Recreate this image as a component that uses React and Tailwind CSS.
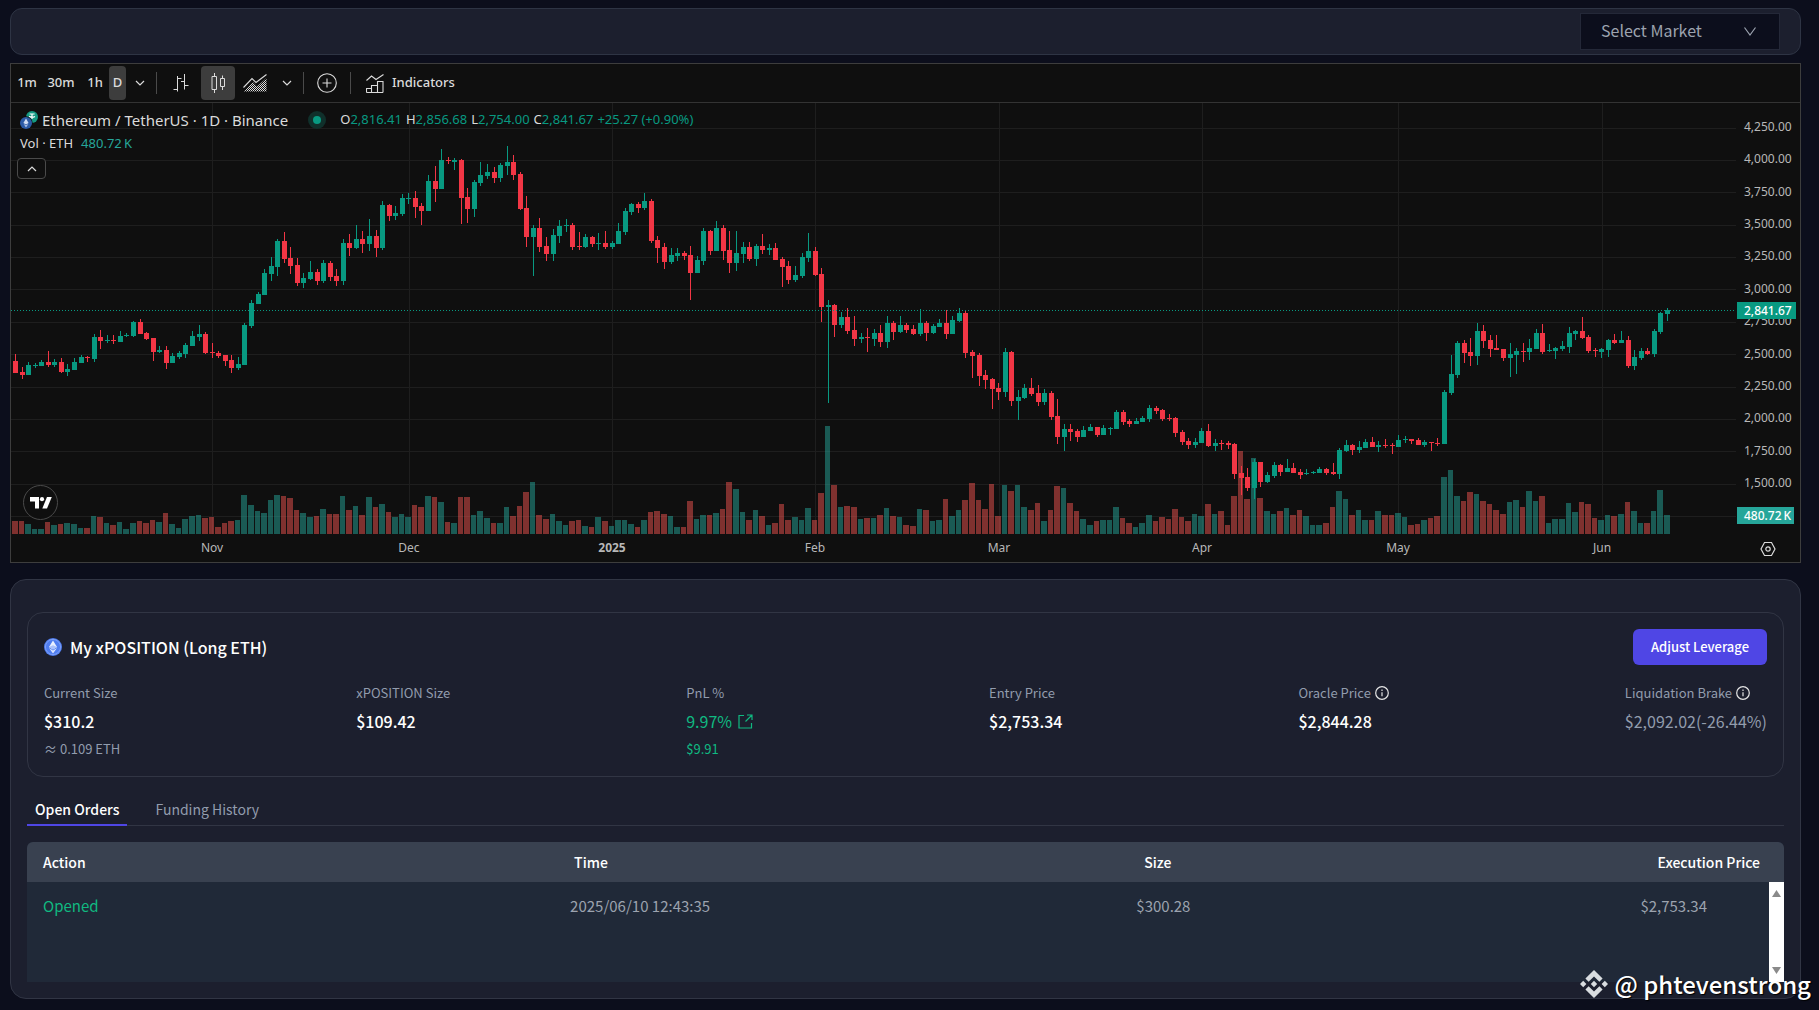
import React from "react";

const CANDLES = `
r354 361 373 373 521|r367 372 375 379 521|g362 365 375 375 524|g363 365 366 368 529|g360 362 366 366 529|r351 362 365 367 522|g359 362 365 367 525|r358 362 372 373 524|g364 369 372 376 523|g358 362 370 370 524|g355 357 363 363 528|r356 357 358 362 528|g334 337 359 362 516|r330 337 341 349 517|g335 340 341 343 523|r335 340 341 344 525|g331 336 342 342 522|g333 335 336 337 529|g321 322 336 337 523|r319 322 334 334 521|r332 333 339 340 523|r338 338 352 361 520|g346 350 352 353 522|r346 350 363 369 513|g353 356 363 363 524|g351 353 357 359 528|g343 345 354 358 519|g331 336 346 346 516|g325 334 337 341 515|r332 334 353 354 518|r343 352 353 358 517|r351 353 356 358 527|r355 355 361 366 523|r355 360 368 373 521|g357 364 368 370 520|g323 325 365 365 495|g300 303 326 328 505|g292 294 304 304 511|g269 273 295 295 513|g257 266 274 281 500|g239 241 267 276 495|r232 241 259 263 496|r247 258 266 274 498|r258 265 283 286 510|g273 278 283 288 513|g261 272 279 280 517|r269 272 281 285 516|g260 263 281 283 509|r261 263 277 281 514|r269 276 281 286 514|g239 243 281 285 496|r234 243 248 256 510|g225 239 248 249 506|r231 239 244 253 515|g219 236 244 251 497|r230 236 248 257 507|g201 205 248 250 504|r204 205 216 221 512|g206 213 216 220 517|g194 198 214 216 514|g193 198 199 204 517|r191 198 207 218 505|r203 206 211 225 507|g175 181 211 211 496|r166 181 189 202 497|g149 160 189 189 502|r157 160 161 164 522|g158 160 162 170 523|r159 160 198 224 497|r188 197 209 223 497|g180 182 209 217 515|g162 175 183 186 511|g164 172 176 179 518|r167 172 178 183 523|g163 165 178 182 523|g146 162 166 175 507|r155 162 175 180 516|r172 174 209 210 506|r196 208 237 247 492|g225 228 237 276 482|r218 228 247 252 515|r237 246 254 261 519|g229 235 254 261 514|g220 226 236 243 521|g219 225 226 232 525|r223 225 247 250 521|r232 246 247 250 520|g234 237 247 248 526|r236 237 244 247 527|g233 243 244 250 517|r231 243 247 249 521|g241 243 247 249 526|g223 231 244 244 520|g208 211 232 235 520|g203 204 212 215 524|r202 204 208 213 527|g193 201 208 210 520|r199 201 241 243 512|r236 240 248 263 511|r243 247 262 269 514|g248 255 262 264 516|g248 253 256 261 527|r251 253 256 260 527|r246 255 273 300 501|g256 260 273 273 519|g228 231 261 265 515|r230 231 251 255 515|g221 228 251 251 513|r225 228 251 260 509|r231 250 263 273 482|g231 253 263 271 489|g242 247 254 263 512|r242 247 259 261 520|g244 246 259 266 510|r234 246 250 254 516|g244 248 250 255 525|r243 248 260 260 523|r257 259 267 287 504|r261 266 280 284 520|g266 275 280 282 517|g253 257 276 278 520|g233 251 258 262 508|r247 251 275 276 520|r268 274 307 322 493|g300 305 307 403 426|r304 305 325 337 485|g312 317 325 328 507|r308 317 331 334 506|r316 330 339 346 507|g333 337 339 343 519|r328 337 338 352 518|g329 333 339 346 518|r325 333 342 347 515|g316 323 342 348 508|r321 323 332 340 516|g316 325 332 333 517|r323 325 330 333 525|r325 329 334 335 526|g309 323 334 336 509|r321 323 333 341 510|g324 326 333 334 521|g319 323 327 327 520|r310 323 334 339 499|g316 320 334 334 516|g308 313 321 322 510|r310 313 353 358 500|r350 352 356 378 483|r353 355 376 386 500|r370 375 380 389 509|r378 379 389 409 484|r383 388 392 400 516|g348 352 392 397 485|r351 352 401 406 491|g390 397 401 420 485|g384 388 398 399 507|r378 388 394 396 510|r385 393 402 406 503|g389 393 402 405 521|r391 393 417 420 510|r399 416 437 444 486|g424 429 437 451 488|r424 429 432 441 503|r429 431 437 442 511|g426 430 437 437 519|g424 427 431 431 525|r427 427 435 437 521|g425 428 435 435 520|g427 428 429 435 520|g410 412 429 429 507|r410 412 422 425 518|r419 421 424 427 523|g418 421 424 424 527|g416 418 422 422 523|g405 408 419 422 515|r406 408 411 414 521|r409 410 419 421 517|r414 418 419 421 519|r417 418 433 437 509|r430 432 442 445 517|r438 441 445 449 521|g438 442 445 448 514|g428 431 443 443 516|r424 431 446 447 504|g439 443 446 451 514|r440 443 444 450 511|r441 443 445 449 525|r443 444 474 479 496|r466 473 478 495 451|r468 477 488 491 499|g459 462 488 499 458|r462 462 482 487 498|g472 475 482 483 511|g462 465 476 478 514|r464 465 472 476 511|g459 468 472 472 508|r463 468 473 473 515|r469 472 475 479 510|g469 473 474 475 516|g471 472 473 474 525|g467 469 473 473 525|r468 469 473 475 523|r463 472 474 475 507|g448 450 474 479 491|g440 445 451 452 499|r444 445 450 455 515|g441 447 450 453 510|g439 442 448 448 520|r437 442 447 447 520|g441 445 447 452 511|r439 445 446 448 515|r443 445 446 454 515|g435 440 447 447 513|g436 439 440 443 517|r439 439 441 444 525|r438 440 445 445 524|g440 442 445 447 520|r442 442 443 451 518|r438 443 444 446 516|g390 392 444 444 477|g355 374 393 395 470|g341 343 375 378 496|r340 343 353 363 501|r338 352 356 366 492|g323 331 356 365 494|r325 331 341 348 501|r335 340 349 357 504|r335 348 350 350 510|r349 349 358 361 514|g343 354 358 377 502|g348 351 355 374 500|r343 351 352 362 507|g339 348 352 360 491|g329 333 349 349 501|r324 333 352 354 496|g344 350 351 352 523|g347 348 351 359 519|g341 346 349 351 519|g327 333 347 353 503|g330 331 334 340 512|r317 331 338 339 502|r335 337 351 353 504|r348 350 351 357 518|g348 349 352 358 520|g339 340 350 357 515|r334 340 343 344 516|g331 340 343 343 514|r336 340 366 368 502|g350 357 366 370 511|g348 351 358 360 523|r348 351 354 355 523|g329 331 354 357 511|g312 313 332 334 490|g308 310 314 321 515
`
  .trim()
  .split("|")
  .map((row, i) => {
    const [wickTop, top, bottom, wickBottom, volTop] = row.slice(1).split(" ").map(Number);
    return { up: row[0] === "g", x: Math.round(15 + i * 6.555), wickTop, top, bottom, wickBottom, volTop };
  });

const GRID_Y = [128, 160, 192, 225, 257, 289, 322, 354, 387, 419, 451, 484, 516];
const MONTHS = [
  [212, "Nov"],
  [409, "Dec"],
  [612, "2025"],
  [815, "Feb"],
  [999, "Mar"],
  [1202, "Apr"],
  [1398, "May"],
  [1602, "Jun"],
];
const PRICES = ["4,250.00", "4,000.00", "3,750.00", "3,500.00", "3,250.00", "3,000.00", "2,750.00", "2,500.00", "2,250.00", "2,000.00", "1,750.00", "1,500.00"];

function Chevron({ className, up }) {
  return (
    <svg className={className} width="10" height="6" viewBox="0 0 10 6" fill="none" stroke="currentColor" strokeWidth="1.2" aria-hidden="true">
      <path d={up ? "M1 5l4-4 4 4" : "M1 1l4 4 4-4"} />
    </svg>
  );
}

function InfoIcon() {
  return (
    <svg width="14" height="14" viewBox="0 0 14 14" fill="none" stroke="#e5e5e5" strokeWidth="1.2" aria-hidden="true">
      <circle cx="7" cy="7" r="6.3" />
      <path d="M7 6.2v4M7 3.6v1.4" />
    </svg>
  );
}

function EthCoin({ size }) {
  return (
    <svg width={size} height={size} viewBox="0 0 18 18" aria-hidden="true">
      <circle cx="9" cy="9" r="9" fill="#4f7df0" />
      <circle cx="9" cy="9" r="7.6" fill="none" stroke="#9db8fa" strokeWidth="0.6" />
      <path d="M9 2.4L5 9.1l4 2.3 4-2.3z" fill="#e8efff" />
      <path d="M9 7.2L5 9.1l4 2.3 4-2.3z" fill="#a9c0fb" />
      <path d="M5 10.1l4 5.5 4-5.5-4 2.3z" fill="#dbe6ff" />
    </svg>
  );
}

function PairLogo() {
  return (
    <svg width="18" height="18" viewBox="0 0 18 18" aria-hidden="true">
      <circle cx="12" cy="6" r="6" fill="#159a83" />
      <path d="M9.6 3h5M12 3v5M9 5.4c1.8.9 4.400.9 6 0" stroke="#fff" strokeWidth="1.2" fill="none" />
      <circle cx="6" cy="12" r="6.7" fill="#0f0f0f" />
      <circle cx="6" cy="12" r="6" fill="#2b5aa5" />
      <path d="M6 7.400L3.400 12 6 13.500 8.600 12z" fill="#cfdcf3" />
      <path d="M3.600 13L6 16.500 8.400 13 6 14.300z" fill="#a9c0e8" />
    </svg>
  );
}

function Toolbar() {
  const interval = "h-[34px] cursor-pointer rounded";
  return (
    <div className="flex h-[39px] items-center border-b border-[#333333] pl-1 text-[13px] font-medium text-[#dbdbdb]" role="toolbar" aria-label="Chart toolbar">
      <button type="button" className={`${interval} w-6`}>1m</button>
      <button type="button" className={`${interval} ml-1 w-[36px]`}>30m</button>
      <button type="button" className={`${interval} ml-1 w-6`}>1h</button>
      <button type="button" aria-pressed="true" className={`${interval} ml-[2px] w-[17px] bg-[#3d3d3d]`}>D</button>
      <button type="button" aria-label="More intervals" className="ml-[6px] flex h-[34px] w-4 items-center justify-center">
        <Chevron />
      </button>
      <span className="ml-2 h-[22px] w-px bg-[#4a4a4a]" />
      <button type="button" aria-label="Bars" className="ml-3 flex h-[34px] w-6 items-center justify-center">
        <svg width="16" height="18" viewBox="0 0 16 18" fill="none" stroke="currentColor">
          <path d="M4.500 2v15.500M0.500 15.500h4M4.500 4.500h4M11.500 0v15.500M8 7.500h3.500M11.500 11.500h4" />
        </svg>
      </button>
      <button type="button" aria-label="Candles" aria-pressed="true" className="ml-2 flex h-[34px] w-[34px] items-center justify-center rounded bg-[#3d3d3d]">
        <svg width="16" height="20" viewBox="0 0 16 20" fill="none" stroke="currentColor">
          <path d="M4.500 0v3M4.500 16.500V20M2 3.500h4.500v13H2zM12.500 2.500v3M12.500 13.500v3.500M10.500 5.500h4v8h-4z" />
        </svg>
      </button>
      <button type="button" aria-label="Area" className="ml-2 flex h-[34px] w-6 items-center justify-center">
        <svg width="24" height="18" viewBox="0 0 24 18">
          <defs>
            <pattern id="dots" width="2" height="2" patternUnits="userSpaceOnUse">
              <rect width="1" height="1" fill="#dbdbdb" />
              <rect x="1" y="1" width="1" height="1" fill="#dbdbdb" />
            </pattern>
          </defs>
          <path d="M1 17.500L10 8l4 4.500L23.500 4v13.500z" fill="url(#dots)" />
          <path d="M0.500 13.500L9 4.500l4 4L23.500.5" fill="none" stroke="currentColor" strokeWidth="1.100" />
        </svg>
      </button>
      <button type="button" aria-label="More chart styles" className="ml-3 flex h-[34px] w-4 items-center justify-center">
        <Chevron />
      </button>
      <span className="ml-2 h-[22px] w-px bg-[#4a4a4a]" />
      <button type="button" aria-label="Compare" className="ml-3 flex h-[34px] w-[22px] items-center justify-center">
        <svg width="20" height="20" viewBox="0 0 20 20" fill="none" stroke="currentColor" strokeWidth="1.100">
          <circle cx="10" cy="10" r="9.300" />
          <path d="M10 5.500v9M5.500 10h9" />
        </svg>
      </button>
      <span className="ml-3 h-[22px] w-px bg-[#4a4a4a]" />
      <button type="button" className="ml-[15px] flex h-[34px] items-center gap-2">
        <svg width="18" height="19" viewBox="0 0 18 19" fill="none" stroke="currentColor" strokeWidth="1.100">
          <path d="M.5 6.500L5.500 2l4.500 3.500L17.500.5M.5 18.500v-4h5v4M5.500 14.500v-3h6v7M11.500 11.500v-4h5.500v11M.5 18.500h16.500M5.500 14.500v4" />
        </svg>
        Indicators
      </button>
    </div>
  );
}

function Plot() {
  return (
    <svg className="block h-[459px] w-full" role="img" aria-label="ETH/USDT daily candles">
      <g transform="translate(-11 -103)">
        <g fill="#1e1e1e">
          {GRID_Y.map((y) => (
            <rect key={y} x="11" y={y} width="1725" height="1" />
          ))}
          {MONTHS.map(([x]) => (
            <rect key={x} x={x} y="103" width="1" height="431" />
          ))}
        </g>
        {CANDLES.map((c, i) => {
          const next = CANDLES[i + 1] ? CANDLES[i + 1].x : c.x + 7;
          return <rect key={i} x={c.x - 3} y={c.volTop} width={next - c.x - 1} height={534 - c.volTop} fill={c.up ? "#26a69a" : "#ef5350"} fillOpacity="0.5" />;
        })}
        {CANDLES.map((c, i) => (
          <g key={i} fill={c.up ? "#089981" : "#f23645"}>
            <rect x={c.x} y={c.wickTop} width="1" height={c.wickBottom - c.wickTop} />
            <rect x={c.x - 2} y={c.top} width="5" height={c.bottom - c.top} />
          </g>
        ))}
        <path d="M11 310.500H1736" stroke="#089981" strokeDasharray="1 2" />
        <g fill="#b8b8b8" fontSize="12" textAnchor="middle">
          {MONTHS.map(([x, name]) => (
            <text key={name} x={x} y="552" fontWeight={name === "2025" ? 700 : 400}>
              {name}
            </text>
          ))}
        </g>
      </g>
    </svg>
  );
}

function Ohlc({ label, value }) {
  return (
    <span>
      {label}
      <span className="text-[#089981]">{value}</span>
    </span>
  );
}

function Chart() {
  return (
    <section className="mt-2 border border-[#3d3d3d] bg-[#0f0f0f] font-['Noto_Sans','Trebuchet_MS',sans-serif]">
      <Toolbar />
      <div className="relative flex">
        <div className="min-w-0 flex-1">
          <Plot />
        </div>
        <div className="relative w-16 text-xs text-[#b8b8b8]">
          <ul className="flex h-[388px] flex-col justify-between pl-2 pt-4 leading-4">
            {PRICES.map((p) => (
              <li key={p}>{p}</li>
            ))}
          </ul>
          <span className="absolute left-px top-[199px] h-[17px] w-[59px] bg-[#089981] pl-[7px] font-medium leading-[17px] text-white">2,841.67</span>
          <span className="absolute left-px top-[404px] h-[17px] w-[57px] bg-[#26a69a] pl-[7px] font-medium leading-[17px] text-white">{"480.72\u202fK"}</span>
          <button type="button" aria-label="Chart settings" className="absolute left-6 top-[438px] text-[#dbdbdb]">
            <svg width="16" height="16" viewBox="0 0 16 16" fill="none" stroke="currentColor" strokeWidth="1.200">
              <path d="M4.500 1.500h7L15 8l-3.500 6.500h-7L1 8z" />
              <circle cx="8" cy="8" r="2.200" />
            </svg>
          </button>
        </div>
        <div className="absolute left-[9px] top-[6px] text-[#dbdbdb]">
          <div className="flex h-[22px] items-center">
            <PairLogo />
            <h2 className="ml-1 text-[15px] leading-5">Ethereum / TetherUS · 1D · Binance</h2>
            <span className="ml-5 flex size-[18px] items-center justify-center rounded-full bg-[#10302b]">
              <span className="size-2 rounded-full bg-[#089981]" />
            </span>
            <div className="ml-[14px] flex gap-1 text-[13px]">
              <Ohlc label="O" value="2,816.41" />
              <Ohlc label="H" value="2,856.68" />
              <Ohlc label="L" value="2,754.00" />
              <Ohlc label="C" value="2,841.67" />
              <span className="text-[#089981]">+25.27 (+0.90%)</span>
            </div>
          </div>
          <div className="mt-1 flex h-[18px] items-center gap-2 text-[13px]">
            <span>Vol · ETH</span>
            <span className="text-[#26a69a]">{"480.72\u202fK"}</span>
          </div>
          <button type="button" aria-label="Collapse legend" className="mt-[5px] -ml-[3px] flex h-[21px] w-[29px] items-center justify-center rounded-sm border border-[#4a4a4a] bg-[#0f0f0f]">
            <Chevron up />
          </button>
        </div>
        <a href="#tradingview" aria-label="TradingView" className="absolute left-3 top-[382px] flex size-[35px] items-center justify-center rounded-full border border-[#4a4a4a] bg-[#0f0f0f]">
          <svg width="22" height="12" viewBox="0 0 22 12" fill="#fff" aria-hidden="true">
            <path d="M0 0h9v11.500H5V4.500H0z" />
            <circle cx="12" cy="2.200" r="2.100" />
            <path d="M17 0h4.800L17 11.500h-4.700z" />
          </svg>
        </a>
      </div>
    </section>
  );
}

function Stat({ label, info, value, valueClass, note, noteClass }) {
  return (
    <div>
      <dt className="flex h-5 items-center gap-1 text-[13px] text-[#929cad]">
        {label}
        {info && <InfoIcon />}
      </dt>
      <dd className={`mt-2 flex h-5 items-center gap-[6px] text-[16px] ${valueClass}`}>{value}</dd>
      {note && <dd className={`mt-2 h-5 text-[13px] leading-5 ${noteClass}`}>{note}</dd>}
    </div>
  );
}

function Position() {
  const strong = "font-medium text-white";
  return (
    <section className="rounded-2xl border border-[#313544] p-4">
      <header className="flex items-center justify-between">
        <h1 className="flex items-center gap-2 text-[16px] leading-6 font-medium text-white">
          <EthCoin size={18} />
          My xPOSITION (Long ETH)
        </h1>
        <button type="button" className="h-9 cursor-pointer rounded-md bg-[#4f46e5] px-[18px] text-[13px] font-medium text-white">
          Adjust Leverage
        </button>
      </header>
      <dl className="mt-[18px] flex h-[77px] justify-between">
        <Stat label="Current Size" value="$310.2" valueClass={strong} note="≈ 0.109 ETH" noteClass="text-[#929cad]" />
        <Stat label="xPOSITION Size" value="$109.42" valueClass={strong} />
        <Stat
          label="PnL %"
          valueClass="text-[#10b981]"
          value={
            <>
              9.97%
              <svg width="15" height="15" viewBox="0 0 15 15" fill="none" stroke="currentColor" strokeWidth="1.200" aria-hidden="true">
                <path d="M6 1.500H1v12.500h12.500V9M9 1h5v5M14 1L7.500 7.500" />
              </svg>
            </>
          }
          note="$9.91"
          noteClass="text-[#10b981]"
        />
        <Stat label="Entry Price" value="$2,753.34" valueClass={strong} />
        <Stat label="Oracle Price" info value="$2,844.28" valueClass={strong} />
        <Stat label="Liquidation Brake" info value="$2,092.02(-26.44%)" valueClass="text-[#929cad]" />
      </dl>
    </section>
  );
}

function Orders() {
  return (
    <>
      <div role="tablist" className="mt-4 flex h-[33px] gap-5 border-b border-[#313544] text-sm">
        <button type="button" role="tab" aria-selected="true" className="-mb-px border-b-2 border-[#4f46e5] px-2 font-medium text-white">
          Open Orders
        </button>
        <button type="button" role="tab" aria-selected="false" className="px-2 text-[#929cad]">
          Funding History
        </button>
      </div>
      <div className="relative mt-4 overflow-hidden rounded-t-md bg-[#202938]">
        <table className="w-full table-fixed text-left text-sm">
          <thead className="bg-[#394150] text-white">
            <tr className="h-10">
              <th className="w-[30%] pl-4 font-medium">Action</th>
              <th className="w-[32%] pl-5 font-medium">Time</th>
              <th className="pl-7 font-medium">Size</th>
              <th className="pr-6 text-right font-medium">Execution Price</th>
            </tr>
          </thead>
          <tbody className="text-[15px] text-[#9ca3af]">
            <tr className="h-12">
              <td className="pl-4 text-[#10b981]">Opened</td>
              <td className="pl-4">2025/06/10 12:43:35</td>
              <td className="pl-5">$300.28</td>
              <td className="pr-[77px] text-right">$2,753.34</td>
            </tr>
          </tbody>
        </table>
        <div className="h-[52px]" />
        <div className="absolute right-0 bottom-0 flex h-[100px] w-[15px] flex-col items-center justify-between bg-white py-2 text-[#8a8a8a]" aria-hidden="true">
          <svg width="9" height="7" viewBox="0 0 9 7" fill="currentColor">
            <path d="M4.500 0L9 7H0z" />
          </svg>
          <svg width="9" height="7" viewBox="0 0 9 7" fill="currentColor">
            <path d="M0 0h9L4.500 7z" />
          </svg>
        </div>
      </div>
    </>
  );
}

export default function App() {
  return (
    <main className="relative min-h-screen bg-[#0c0e1c] pt-2 pr-[18px] pb-[10px] pl-[10px] font-['Noto_Sans_CJK_SC','Noto_Sans',sans-serif]">
      <header className="flex h-[47px] items-center justify-end rounded-xl border border-[#2e3444] bg-[#1c1f2e] pr-5">
        <label htmlFor="market" className="sr-only">
          Market
        </label>
        <div className="relative">
          <select id="market" className="block h-[37px] w-[200px] appearance-none border border-[#242838] bg-[#0c0e1c] pb-1 pl-5 text-[16px] leading-6 text-[#9ca3af]" defaultValue="">
            <option value="">Select Market</option>
          </select>
          <svg className="pointer-events-none absolute top-[14px] right-6 text-[#9ca3af]" width="12" height="9" viewBox="0 0 12 9" fill="none" stroke="currentColor" strokeWidth="1.200" aria-hidden="true">
            <path d="M.5.5L6 8 11.500.5" />
          </svg>
        </div>
      </header>
      <Chart />
      <div className="mt-4 rounded-2xl border border-[#313544] bg-[#1c1f2e] px-4 pt-8 pb-4">
        <Position />
        <Orders />
      </div>
      <div className="absolute right-2 bottom-2 flex items-center gap-[6px] text-[24px] leading-9 font-medium text-white [text-shadow:1px_1px_1px_#000]">
        <svg width="28" height="28" viewBox="0 0 28 28" fill="#d9dde0" aria-hidden="true">
          <path d="M14 0l8.600 8.600-3.200 3.200L14 6.400l-5.400 5.400-3.200-3.200zM14 28l-8.600-8.600 3.200-3.200L14 21.600l5.400-5.400 3.200 3.200zM3.200 10.800L6.400 14l-3.200 3.200L0 14zM24.800 10.800L28 14l-3.200 3.200-3.200-3.200zM14 10.800l3.200 3.200-3.200 3.200-3.200-3.200z" />
        </svg>
        <span>@ phtevenstrong</span>
      </div>
    </main>
  );
}
